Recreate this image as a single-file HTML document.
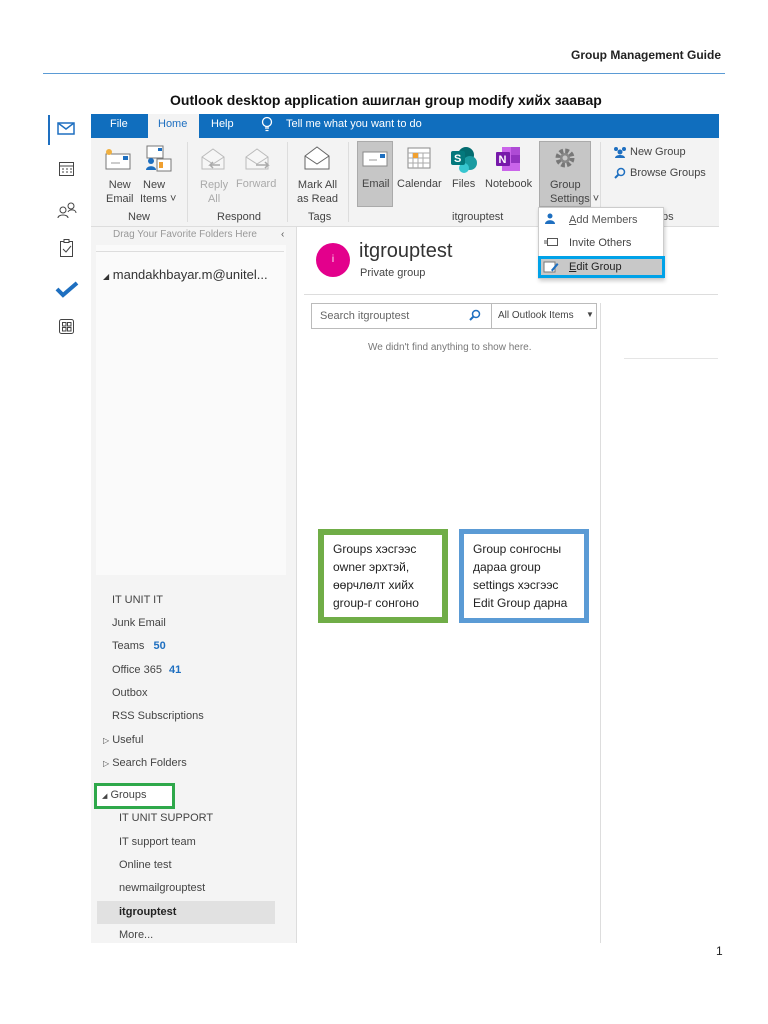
<!DOCTYPE html>
<html><head><meta charset="utf-8"><style>
*{margin:0;padding:0;box-sizing:border-box}
body{width:768px;height:1024px;background:#fff;position:relative;font-family:"Liberation Sans","DejaVu Sans",sans-serif;overflow:hidden;color:#333}
.a{position:absolute;white-space:nowrap}
.s{font-size:11px;color:#444}
.n{font-size:11px;color:#444;position:absolute}
</style></head><body>
<div class="a" style="left:571px;top:48px;font-size:12px;font-weight:bold;color:#222">Group Management Guide</div>
<div class="a" style="left:43px;top:73px;width:682px;height:1px;background:#5b9bd5"></div>
<div class="a" style="left:170px;top:92px;font-size:14px;font-weight:bold;color:#111">Outlook desktop application ашиглан group modify хийх заавар</div>

<div class="a" style="left:48px;top:115px;width:2px;height:30px;background:#1e6fc0"></div>
<svg class="a" style="left:56px;top:120px" width="22" height="18"><rect x="2" y="3" width="16" height="11" fill="none" stroke="#1e6fc0" stroke-width="1.5"/><path d="M2 3l8 6 8-6" fill="none" stroke="#1e6fc0" stroke-width="1.5"/></svg>
<svg class="a" style="left:58px;top:160px" width="18" height="18"><rect x="1.5" y="2.5" width="14" height="13" fill="none" stroke="#444"/><path d="M1.5 6h14M4 9h2M8 9h2M12 9h2M4 12h2M8 12h2M12 12h2" stroke="#444"/></svg>
<svg class="a" style="left:56px;top:200px" width="22" height="20"><circle cx="7" cy="10" r="3" fill="none" stroke="#444"/><path d="M2 18c0-4 10-4 10 0" fill="none" stroke="#444"/><circle cx="15" cy="6" r="3" fill="none" stroke="#444"/><path d="M12 12c1-3 8-3 8 1" fill="none" stroke="#444"/></svg>
<svg class="a" style="left:58px;top:238px" width="18" height="20"><rect x="2.5" y="3.5" width="12" height="15" fill="none" stroke="#444"/><rect x="6" y="1.5" width="5" height="3" fill="#fff" stroke="#444"/><path d="M5 11l3 3 5-6" fill="none" stroke="#444"/></svg>
<svg class="a" style="left:55px;top:280px" width="24" height="18"><path d="M2 9l6 6 14-12" fill="none" stroke="#1e6fc0" stroke-width="4"/></svg>
<svg class="a" style="left:58px;top:318px" width="18" height="18"><rect x="1.5" y="1.5" width="14" height="14" rx="2" fill="none" stroke="#444"/><rect x="4.5" y="4.5" width="3.5" height="3.5" fill="none" stroke="#444"/><rect x="9.5" y="4.5" width="3.5" height="3.5" fill="none" stroke="#444"/><rect x="4.5" y="9.5" width="3.5" height="3.5" fill="none" stroke="#444"/><rect x="9.5" y="9.5" width="3.5" height="3.5" fill="none" stroke="#444"/></svg>

<div class="a" style="left:91px;top:114px;width:628px;height:24px;background:#106ebe"></div>
<div class="a" style="left:148px;top:114px;width:51px;height:25px;background:#f3f3f3"></div>
<div class="a" style="left:110px;top:118px;font-size:11px;color:#fff">File</div>
<div class="a" style="left:158px;top:118px;font-size:11px;color:#1e6fc0">Home</div>
<div class="a" style="left:211px;top:118px;font-size:11px;color:#fff">Help</div>
<svg class="a" style="left:260px;top:116px" width="14" height="18"><circle cx="7" cy="6" r="4.5" fill="none" stroke="#fff" stroke-width="1.3"/><path d="M5 12h4M5.5 14.5h3" stroke="#fff" stroke-width="1.3"/></svg>
<div class="a" style="left:286px;top:118px;font-size:11px;color:#fff">Tell me what you want to do</div>

<div class="a" style="left:91px;top:138px;width:628px;height:89px;background:#f3f3f3;border-bottom:1px solid #ddd"></div>
<svg class="a" style="left:103px;top:146px" width="30" height="26"><rect x="3" y="8" width="24" height="15" fill="#fff" stroke="#777"/><rect x="20" y="10" width="5" height="4" fill="#1e6fc0"/><path d="M8 17h9" stroke="#999"/><circle cx="6" cy="6" r="3" fill="#f0b040"/></svg>
<svg class="a" style="left:143px;top:144px" width="30" height="30"><rect x="4" y="2" width="16" height="12" fill="#fff" stroke="#777"/><rect x="15" y="4" width="4" height="3" fill="#1e6fc0"/><circle cx="8" cy="17" r="3" fill="#1e6fc0"/><path d="M3 26c0-5 10-5 10 0z" fill="#1e6fc0"/><rect x="14" y="15" width="14" height="12" fill="#fff" stroke="#777"/><rect x="16" y="18" width="4" height="6" fill="#f0a030"/></svg>
<div class="n" style="left:106px;top:178px;line-height:14px;text-align:center">New<br>Email</div>
<div class="n" style="left:140px;top:178px;line-height:14px">&nbsp;New<br>Items ˅</div>
<div class="n" style="left:128px;top:211px">New</div>
<div class="a" style="left:187px;top:142px;width:1px;height:80px;background:#ddd"></div>
<svg class="a" style="left:198px;top:145px" width="30" height="28"><path d="M4 12l11-8 11 8v12H4z" fill="#f6f6f6" stroke="#bbb"/><path d="M4 12l11 7 11-7" fill="none" stroke="#bbb"/><path d="M22 20h-10l3-3M12 20l3 3" fill="none" stroke="#aaa" stroke-width="1.5"/></svg>
<svg class="a" style="left:242px;top:145px" width="30" height="28"><path d="M4 12l11-8 11 8v12H4z" fill="#f6f6f6" stroke="#bbb"/><path d="M4 12l11 7 11-7" fill="none" stroke="#bbb"/><path d="M14 20h12l-3-3M26 20l-3 3" fill="none" stroke="#aaa" stroke-width="1.5"/></svg>
<div class="n" style="left:200px;top:178px;line-height:14px;color:#aaa;text-align:center">Reply<br>All</div>
<div class="n" style="left:236px;top:178px;color:#aaa">Forward</div>
<div class="n" style="left:217px;top:211px">Respond</div>
<div class="a" style="left:287px;top:142px;width:1px;height:80px;background:#ddd"></div>
<svg class="a" style="left:302px;top:144px" width="30" height="28"><path d="M3 12l12-9 12 9v13H3z" fill="#fff" stroke="#666"/><path d="M3 12l12 8 12-8" fill="none" stroke="#666"/></svg>
<div class="n" style="left:297px;top:178px;line-height:14px;text-align:center">Mark All<br>as Read</div>
<div class="n" style="left:308px;top:211px">Tags</div>
<div class="a" style="left:348px;top:142px;width:1px;height:80px;background:#ddd"></div>
<div class="a" style="left:357px;top:141px;width:36px;height:66px;background:#c6c6c6;border:1px solid #aaa"></div>
<svg class="a" style="left:361px;top:148px" width="28" height="22"><rect x="2" y="4" width="24" height="14" fill="#fff" stroke="#888"/><rect x="19" y="6" width="5" height="4" fill="#1e6fc0"/><path d="M8 12h8" stroke="#999"/></svg>
<div class="n" style="left:362px;top:178px">Email</div>
<svg class="a" style="left:406px;top:146px" width="26" height="24"><rect x="2" y="2" width="22" height="20" fill="#fff" stroke="#888"/><path d="M2 7h22M7 7v15M12 7v15M17 7v15M2 12h22M2 17h22" stroke="#aaa"/><rect x="7" y="7" width="5" height="5" fill="#f0a030"/></svg>
<div class="n" style="left:397px;top:178px">Calendar</div>
<svg class="a" style="left:449px;top:145px" width="30" height="28"><circle cx="17" cy="10" r="8" fill="#036c70"/><circle cx="21" cy="18" r="7" fill="#1a9ba1"/><circle cx="15" cy="23" r="5" fill="#37c6d0"/><rect x="2" y="6" width="14" height="14" rx="2" fill="#03787c"/><text x="5" y="17" font-size="11" font-weight="bold" fill="#fff" font-family="Liberation Sans">S</text></svg>
<div class="n" style="left:452px;top:178px">Files</div>
<svg class="a" style="left:494px;top:145px" width="30" height="28"><rect x="8" y="2" width="18" height="24" fill="#ca64ea"/><rect x="17" y="2" width="9" height="8" fill="#ae4bd5"/><rect x="17" y="10" width="9" height="8" fill="#9332bf"/><rect x="2" y="7" width="14" height="14" rx="1" fill="#7719aa"/><text x="4.5" y="18" font-size="11" font-weight="bold" fill="#fff" font-family="Liberation Sans">N</text></svg>
<div class="n" style="left:485px;top:178px">Notebook</div>
<div class="a" style="left:539px;top:141px;width:52px;height:66px;background:#c6c6c6;border:1px solid #aaa"></div>
<svg class="a" style="left:553px;top:146px" width="24" height="24"><circle cx="12" cy="12" r="7" fill="none" stroke="#777" stroke-width="5" stroke-dasharray="3.5 2"/><circle cx="12" cy="12" r="5" fill="#888"/><circle cx="12" cy="12" r="2.5" fill="#c6c6c6"/></svg>
<div class="n" style="left:550px;top:178px;line-height:14px">Group<br>Settings ˅</div>
<div class="n" style="left:452px;top:211px">itgrouptest</div>
<div class="a" style="left:600px;top:142px;width:1px;height:80px;background:#ddd"></div>
<svg class="a" style="left:612px;top:146px" width="16" height="12"><circle cx="4" cy="3" r="2" fill="#1e6fc0"/><circle cx="12" cy="3" r="2" fill="#1e6fc0"/><circle cx="8" cy="6" r="2.5" fill="#1e6fc0"/><path d="M3 12c0-4 10-4 10 0z" fill="#1e6fc0"/></svg>
<div class="n" style="left:630px;top:146px">New Group</div>
<svg class="a" style="left:614px;top:167px" width="12" height="12"><circle cx="7" cy="5" r="3.5" fill="none" stroke="#1e6fc0" stroke-width="1.5"/><path d="M4.5 7.5L1 11" stroke="#1e6fc0" stroke-width="2"/></svg>
<div class="n" style="left:630px;top:167px">Browse Groups</div>
<div class="n" style="left:662px;top:211px">ps</div>

<div class="a" style="left:91px;top:227px;width:205px;height:716px;background:#f4f4f4"></div>
<div class="a" style="left:96px;top:245px;width:190px;height:330px;background:#fafafa"></div>
<div class="a" style="left:113px;top:229px;font-size:10px;color:#999">Drag Your Favorite Folders Here</div>
<div class="a" style="left:281px;top:229px;font-size:10px;color:#555">‹</div>
<div class="a" style="left:96px;top:251px;width:188px;height:1px;background:#ddd"></div>
<div class="a" style="left:103px;top:267px;font-size:13px;color:#333"><span style="font-size:8px">◢</span> mandakhbayar.m@unitel...</div>
<div class="a" style="left:296px;top:227px;width:1px;height:716px;background:#ddd"></div>
<div class="a s" style="left:112px;top:594px">IT UNIT IT</div>
<div class="a s" style="left:112px;top:617px">Junk Email</div>
<div class="a s" style="left:112px;top:640px">Teams <b style="color:#1e6fc0;margin-left:6px">50</b></div>
<div class="a s" style="left:112px;top:664px">Office 365 <b style="color:#1e6fc0;margin-left:4px">41</b></div>
<div class="a s" style="left:112px;top:687px">Outbox</div>
<div class="a s" style="left:112px;top:710px">RSS Subscriptions</div>
<div class="a s" style="left:103px;top:734px"><span style="font-size:8px">▷</span> Useful</div>
<div class="a s" style="left:103px;top:757px"><span style="font-size:8px">▷</span> Search Folders</div>
<div class="a" style="left:94px;top:783px;width:81px;height:26px;border:3px solid #2ea84a;background:#fff"></div>
<div class="a s" style="left:102px;top:789px"><span style="font-size:7px">◢</span> Groups</div>
<div class="a s" style="left:119px;top:812px">IT UNIT SUPPORT</div>
<div class="a s" style="left:119px;top:836px">IT support team</div>
<div class="a s" style="left:119px;top:859px">Online test</div>
<div class="a s" style="left:119px;top:882px">newmailgrouptest</div>
<div class="a" style="left:97px;top:901px;width:178px;height:23px;background:#e1e1e1"></div>
<div class="a s" style="left:119px;top:906px;font-weight:bold;color:#222">itgrouptest</div>
<div class="a s" style="left:119px;top:929px">More...</div>

<div class="a" style="left:316px;top:243px;width:34px;height:34px;border-radius:50%;background:#e3008c;color:#fff;font-size:10px;text-align:center;line-height:34px">i</div>
<div class="a" style="left:359px;top:240px;font-size:20px;color:#333">itgrouptest</div>
<div class="a" style="left:360px;top:267px;font-size:11px;color:#444">Private group</div>
<div class="a" style="left:304px;top:294px;width:414px;height:1px;background:#ddd"></div>
<div class="a" style="left:311px;top:303px;width:286px;height:26px;border:1px solid #bbb;background:#fff"></div>
<div class="a" style="left:491px;top:303px;width:1px;height:26px;background:#bbb"></div>
<div class="a" style="left:320px;top:310px;font-size:11px;color:#666">Search itgrouptest</div>
<svg class="a" style="left:469px;top:309px" width="12" height="12"><circle cx="7" cy="5" r="3.5" fill="none" stroke="#1e6fc0" stroke-width="1.5"/><path d="M4.5 7.5L1 11" stroke="#1e6fc0" stroke-width="2"/></svg>
<div class="a" style="left:498px;top:310px;font-size:10px;color:#444">All Outlook Items</div>
<div class="a" style="left:586px;top:310px;font-size:8px;color:#444">▼</div>
<div class="a" style="left:368px;top:342px;font-size:10px;color:#777">We didn't find anything to show here.</div>
<div class="a" style="left:600px;top:303px;width:1px;height:640px;background:#ddd"></div>
<div class="a" style="left:624px;top:358px;width:94px;height:1px;background:#e5e5e5"></div>

<div class="a" style="left:538px;top:207px;width:126px;height:72px;background:#fff;border:1px solid #ccc;box-shadow:1px 2px 4px rgba(0,0,0,.2)"></div>
<svg class="a" style="left:545px;top:213px" width="10" height="12"><circle cx="5" cy="3" r="2.5" fill="#1e6fc0"/><path d="M0 11c0-5 10-5 10 0z" fill="#1e6fc0"/></svg>
<div class="a" style="left:569px;top:214px;font-size:11px;color:#555"><u>A</u>dd Members</div>
<svg class="a" style="left:544px;top:238px" width="14" height="9"><rect x="3.5" y="0.5" width="10" height="7" fill="none" stroke="#555"/><path d="M0 3h3M0 5h3" stroke="#555"/></svg>
<div class="a" style="left:569px;top:237px;font-size:11px;color:#444">Invite Others</div>
<div class="a" style="left:538px;top:256px;width:127px;height:22px;border:3px solid #00a2e8;background:#c8c8c8"></div>
<svg class="a" style="left:543px;top:260px" width="16" height="14"><rect x="1" y="2" width="11" height="10" fill="#fff" stroke="#777"/><path d="M8 10l6-7 1.5 1.5-6 7z" fill="#1e6fc0"/></svg>
<div class="a" style="left:569px;top:261px;font-size:11px;color:#222"><u>E</u>dit Group</div>

<div class="a" style="left:318px;top:529px;width:130px;height:94px;border:6px solid #70ad47;background:#fff"></div>
<div class="a" style="left:333px;top:540px;font-size:12px;line-height:18px;color:#222">Groups хэсгээс<br>owner эрхтэй,<br>өөрчлөлт хийх<br>group-г сонгоно</div>
<div class="a" style="left:459px;top:529px;width:130px;height:94px;border:5px solid #5b9bd5;background:#fff"></div>
<div class="a" style="left:473px;top:540px;font-size:12px;line-height:18px;color:#222">Group сонгосны<br>дараа group<br>settings хэсгээс<br>Edit Group дарна</div>

<div class="a" style="left:716px;top:944px;font-size:12px;color:#222">1</div>
</body></html>
